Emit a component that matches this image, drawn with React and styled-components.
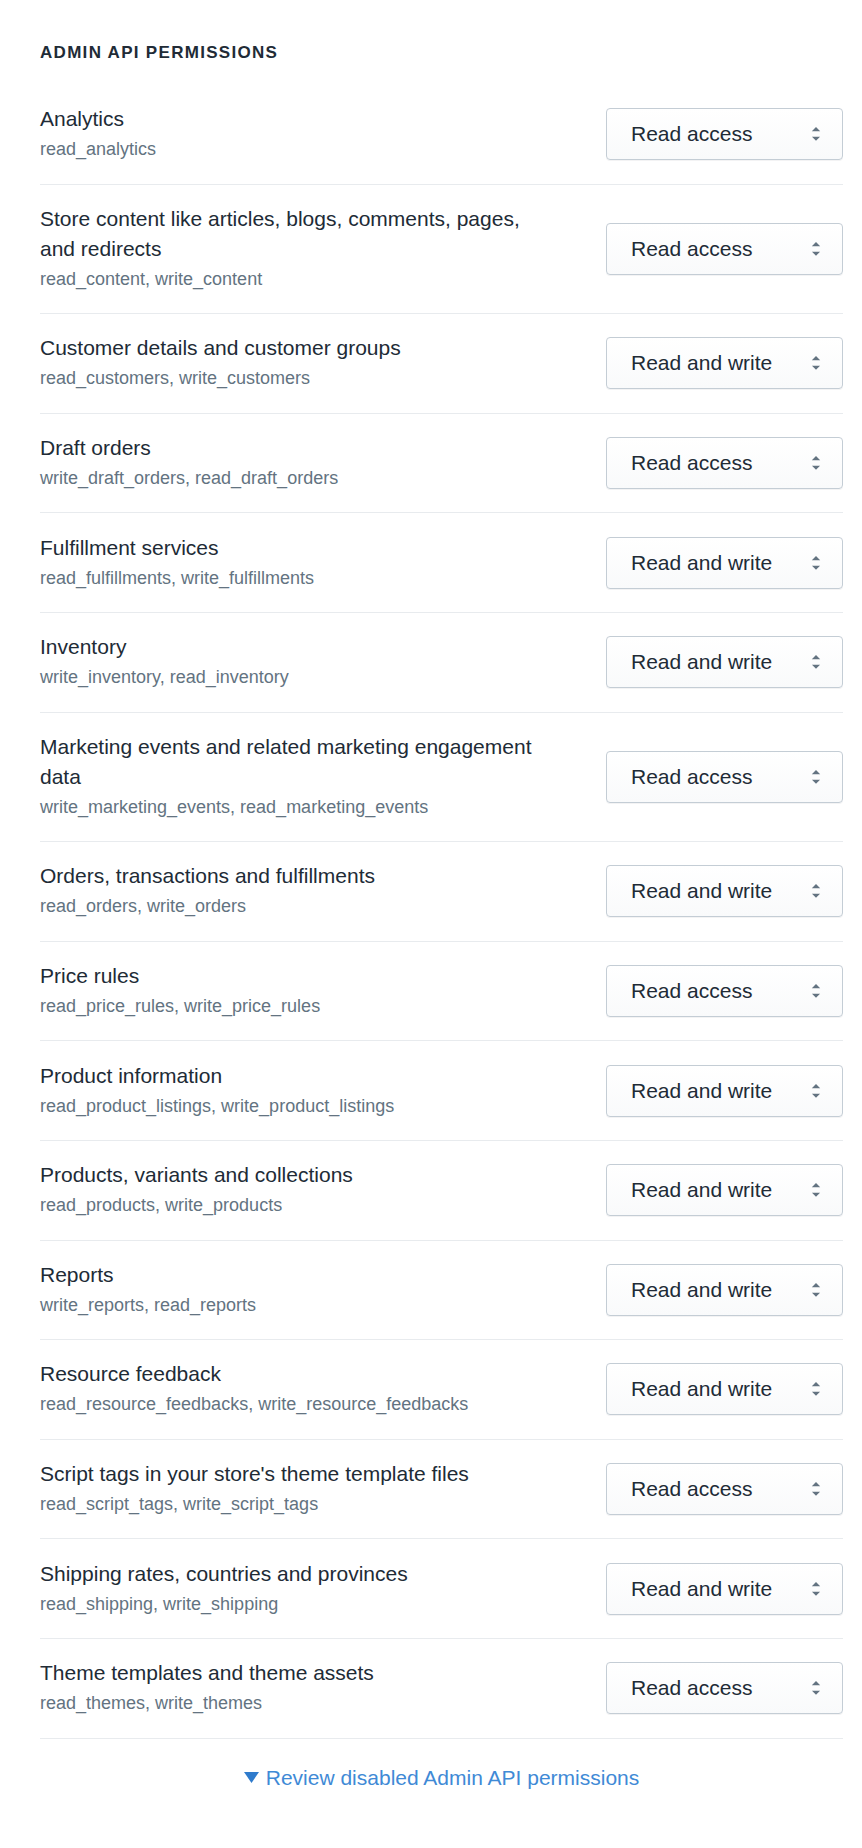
import React from "react";
import styled, { createGlobalStyle } from "styled-components";

const GlobalStyle = createGlobalStyle`
   body {
      margin: 0;
      background: #ffffff;
      font-family: "Liberation Sans", Arial, sans-serif;
      -webkit-font-smoothing: antialiased;
   }
`;

const Page = styled.div`
   padding: 41px 19px 40px 40px;
   color: #212b36;
`;

const Heading = styled.h2`
   margin: 0 0 20px 0;
   font-size: 17px;
   line-height: 24px;
   font-weight: 700;
   letter-spacing: 1.3px;
   text-transform: uppercase;
   color: #212b36;
`;

const Row = styled.div`
   display: flex;
   flex-direction: row;
   justify-content: space-between;
   align-items: center;
   padding: 23.3px 0;
   border-bottom: 1px solid #e8ebee;
`;

const TextBlock = styled.div`
   max-width: 506px;
   margin: -4px 0 -1px 0;
`;

const Title = styled.div`
   font-size: 21px;
   line-height: 30px;
   color: #212b36;
`;

const Scopes = styled.div`
   margin-top: 3px;
   font-size: 18px;
   line-height: 24px;
   color: #637381;
`;

const SelectBox = styled.div`
   flex-shrink: 0;
   width: 237px;
   height: 52px;
   box-sizing: border-box;
   display: flex;
   align-items: center;
   justify-content: space-between;
   padding: 0 12px 0 24px;
   border: 1px solid #c4cdd5;
   border-radius: 4px;
   background: linear-gradient(180deg, #ffffff, #f9fafb);
   box-shadow: 0 1px 0 rgba(22, 29, 37, 0.05);
   font-size: 21px;
   color: #212b36;
   cursor: pointer;
`;

const Footer = styled.div`
   display: flex;
   justify-content: center;
   margin-top: 24px;
`;

const ReviewLink = styled.a`
   display: flex;
   align-items: center;
   gap: 7px;
   font-size: 21px;
   line-height: 30px;
   color: #3f8ad6;
   text-decoration: none;
   cursor: pointer;
`;

const permissions = [
   ["Analytics", "read_analytics", "Read access"],
   [
      "Store content like articles, blogs, comments, pages, and redirects",
      "read_content, write_content",
      "Read access",
   ],
   [
      "Customer details and customer groups",
      "read_customers, write_customers",
      "Read and write",
   ],
   ["Draft orders", "write_draft_orders, read_draft_orders", "Read access"],
   [
      "Fulfillment services",
      "read_fulfillments, write_fulfillments",
      "Read and write",
   ],
   ["Inventory", "write_inventory, read_inventory", "Read and write"],
   [
      "Marketing events and related marketing engagement data",
      "write_marketing_events, read_marketing_events",
      "Read access",
   ],
   [
      "Orders, transactions and fulfillments",
      "read_orders, write_orders",
      "Read and write",
   ],
   ["Price rules", "read_price_rules, write_price_rules", "Read access"],
   [
      "Product information",
      "read_product_listings, write_product_listings",
      "Read and write",
   ],
   [
      "Products, variants and collections",
      "read_products, write_products",
      "Read and write",
   ],
   ["Reports", "write_reports, read_reports", "Read and write"],
   [
      "Resource feedback",
      "read_resource_feedbacks, write_resource_feedbacks",
      "Read and write",
   ],
   [
      "Script tags in your store's theme template files",
      "read_script_tags, write_script_tags",
      "Read access",
   ],
   [
      "Shipping rates, countries and provinces",
      "read_shipping, write_shipping",
      "Read and write",
   ],
   [
      "Theme templates and theme assets",
      "read_themes, write_themes",
      "Read access",
   ],
];

function SelectArrows() {
   return (
      <svg width="28" height="28" viewBox="0 0 20 20" aria-hidden="true">
         <path
            fill="#637381"
            d="M13 8l-3-3-3 3h6zm-.1 4L10 14.9 7.1 12h5.8z"
         />
      </svg>
   );
}

function PermissionRow({ title, scopes, access }) {
   return (
      <Row>
         <TextBlock>
            <Title>{title}</Title>
            <Scopes>{scopes}</Scopes>
         </TextBlock>
         <SelectBox>
            <span>{access}</span>
            <SelectArrows />
         </SelectBox>
      </Row>
   );
}

export default function App() {
   return (
      <React.Fragment>
         <GlobalStyle />
         <Page>
            <Heading>Admin API permissions</Heading>
            {permissions.map(([title, scopes, access], index) => (
               <PermissionRow
                  key={index}
                  title={title}
                  scopes={scopes}
                  access={access}
               />
            ))}
            <Footer>
               <ReviewLink>
                  <svg width="15" height="11" viewBox="0 0 15 11" aria-hidden="true">
                     <path fill="#2f7bcc" d="M0 0h15L7.5 11z" />
                  </svg>
                  Review disabled Admin API permissions
               </ReviewLink>
            </Footer>
         </Page>
      </React.Fragment>
   );
}
